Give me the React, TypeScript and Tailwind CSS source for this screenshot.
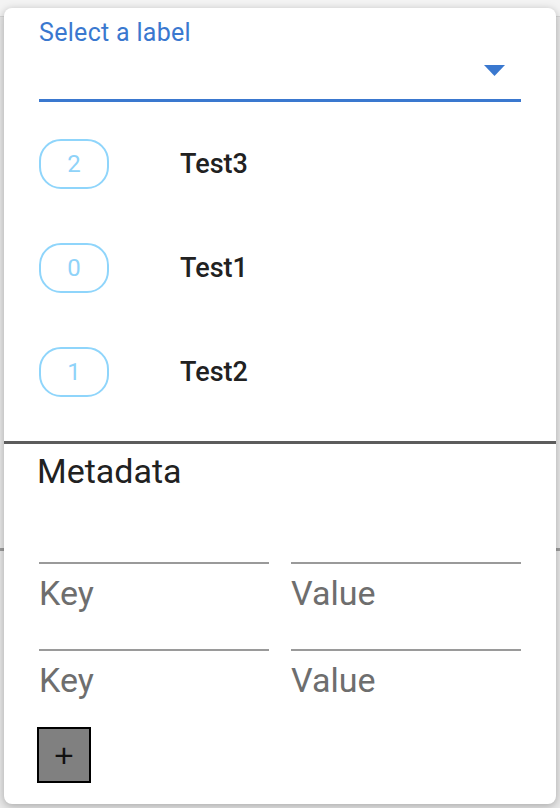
import { useState } from 'react'

type LabelOption = {
  name: string
  count: number
}

const labels: LabelOption[] = [
  { name: 'Test3', count: 2 },
  { name: 'Test1', count: 0 },
  { name: 'Test2', count: 1 },
]

function CountPill({ count }: { count: number }) {
  return (
    <span className="flex h-[50px] w-[70px] items-center justify-center rounded-[22px] border-2 border-[#8fd5fb] text-[24px] leading-none text-[#8fd3f9]">
      {count}
    </span>
  )
}

function MetaField({ placeholder }: { placeholder: string }) {
  return (
    <input
      placeholder={placeholder}
      className="box-border h-[54px] w-full border-t-2 border-[#9a9a9a] bg-transparent pt-[5px] pb-0 text-[34px] leading-none text-[#212121] outline-none placeholder:text-[#6e6e6e]"
    />
  )
}

export default function App() {
  const [rows, setRows] = useState(2)

  return (
    <div className="relative h-[808px] w-[560px] overflow-hidden bg-[#e8e8e8] font-['Roboto',sans-serif]">
      {/* page behind the popover */}
      <div className="h-[17px] border-b border-[#d6d6d6] bg-[#f3f3f3]" />
      <div className="flex justify-between pt-[56px] text-[44px] leading-none text-[#5a5a5a]">
        <span className="-ml-[26px]">S</span>
        <span className="-mr-[14px]">r</span>
      </div>
      <div className="mt-[431px] h-[3px] bg-[#9c9c9c]" />

      {/* popover */}
      <div className="absolute top-[8px] left-[4px] flex h-[796px] w-[552px] flex-col rounded-[8px] bg-white shadow-[0_2px_8px_rgba(0,0,0,0.28)]">
        <div className="px-[35px] pt-[12px]">
          <div className="text-[25px] leading-none tracking-[0.3px] text-[#3a78cf]">Select a label</div>
          <div className="flex h-[57px] items-start justify-end border-b-[3px] border-[#3a78cf] pt-[20px] pr-[16px]">
            <svg width="21" height="11" viewBox="0 0 21 11">
              <path d="M0 0 H21 L10.5 11 Z" fill="#3a78cf" />
            </svg>
          </div>
        </div>

        <ul className="mt-[10px] px-[35px]">
          {labels.map((label) => (
            <li key={label.name} className="flex h-[104px] items-center">
              <CountPill count={label.count} />
              <span className="ml-[71px] text-[27px] font-medium leading-none text-[#212121]">
                {label.name}
              </span>
            </li>
          ))}
        </ul>

        <div className="mt-[17px] border-t-[3px] border-[#5c5c5c]" />

        <div className="flex flex-1 flex-col px-[35px] pb-[21px]">
          <h2 className="mt-[10px] -ml-[2px] text-[34px] font-normal leading-none text-[#212121]">Metadata</h2>
          <div className="mt-[74px] flex flex-col gap-[33px]">
            {Array.from({ length: rows }).map((_, i) => (
              <div key={i} className="grid grid-cols-2 gap-[22px]">
                <MetaField placeholder="Key" />
                <MetaField placeholder="Value" />
              </div>
            ))}
          </div>
          <button
            onClick={() => setRows(rows + 1)}
            className="mt-auto -ml-[2px] flex h-[56px] w-[54px] items-center justify-center border-2 border-black bg-[#808080] font-['Liberation_Sans',sans-serif] text-[34px] leading-none text-[#111]"
          >
            +
          </button>
        </div>
      </div>
    </div>
  )
}
